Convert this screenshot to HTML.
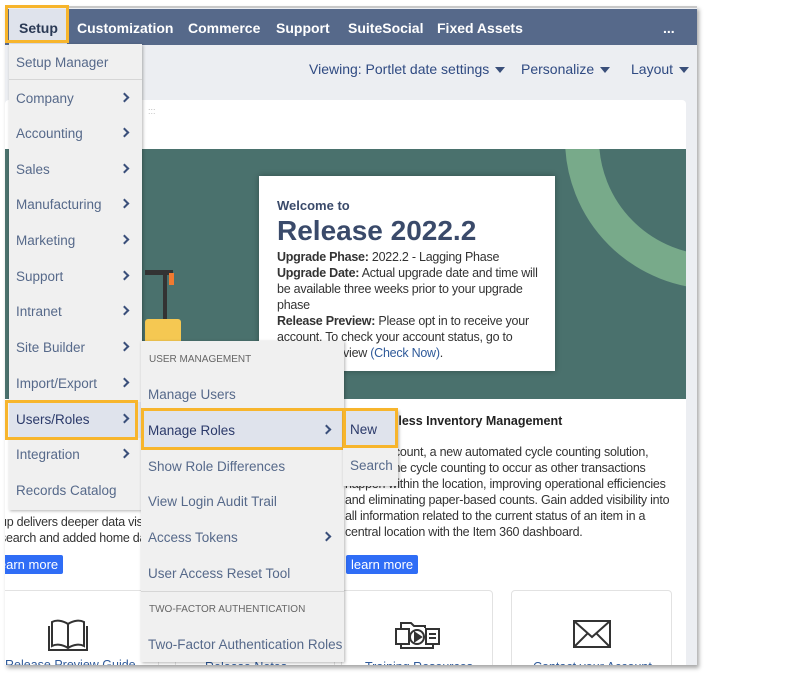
<!DOCTYPE html>
<html><head><meta charset="utf-8">
<style>
*{box-sizing:border-box;margin:0;padding:0}
body{width:794px;height:674px;background:#fff;position:relative;overflow:hidden;font-family:"Liberation Sans",sans-serif}
.abs{position:absolute}
.frame{left:5px;top:6px;width:692px;height:659px;background:#eceef2;border-top:2px solid #c8c8c8;box-shadow:2px 3px 4px rgba(0,0,0,.35);overflow:hidden}
.nav{left:0;top:1px;width:692px;height:36px;background:#56698a}
.nav span{position:absolute;top:11px;color:#fff;font-weight:bold;font-size:14px}
.sub{color:#2f4a82;font-size:14px;top:53px}
.tri{display:inline-block;width:0;height:0;border-left:5px solid transparent;border-right:5px solid transparent;border-top:6px solid #3a4f7a;margin-left:6px;vertical-align:middle}
.menu{background:#f0f0f0;box-shadow:1px 1px 3px rgba(0,0,0,.3)}
.mi{position:absolute;left:0;width:100%;font-size:13.5px;color:#56698a;padding-left:7px}
.chev{position:absolute;right:14px;top:3px;width:7px;height:7px;border-right:2px solid #3a4f7a;border-top:2px solid #3a4f7a;transform:rotate(45deg)}
.obox{position:absolute;border:3px solid #f7b52c}
.txt{font-size:12.5px;color:#333;line-height:16px;letter-spacing:-0.25px}
.btn{background:#2f6df6;color:#fff;font-size:13px;padding:2px 5px;border-radius:2px}
.card{background:#fff;border:1px solid #e2e2e2;border-radius:4px}
.lnk{color:#2f5a9a;font-size:12.5px}
</style></head><body>
<div class="abs frame">
  <div class="abs nav">
    <span style="left:72px">Customization</span>
    <span style="left:183px">Commerce</span>
    <span style="left:271px">Support</span>
    <span style="left:343px">SuiteSocial</span>
    <span style="left:432px">Fixed Assets</span>
    <span style="left:658px">...</span>
  </div>
  <div class="abs" style="left:4px;top:1px;width:58px;height:35px;background:#dfe3ec"></div>
  <span class="abs" style="left:14px;top:12px;font-weight:bold;font-size:14px;color:#2b3a55">Setup</span>
  <div class="abs sub" style="left:304px">Viewing: Portlet date settings<i class="tri"></i></div>
  <div class="abs sub" style="left:516px">Personalize<i class="tri"></i></div>
  <div class="abs sub" style="left:626px">Layout<i class="tri"></i></div>
  <div class="abs" style="left:0;top:92px;width:681px;height:570px;background:#fff;border-radius:4px"></div>
  <div class="abs" style="left:143px;top:98px;color:#bbb;font-size:9px">:::</div>
  <div class="abs" style="left:0;top:141px;width:681px;height:250px;background:#4a716d;overflow:hidden">
    <div class="abs" style="left:560px;top:-160px;width:300px;height:300px;border-radius:50%;border:34px solid #78aa8a"></div>
    <div class="abs" style="left:140px;top:121px;width:28px;height:5px;background:#333"></div>
    <div class="abs" style="left:158px;top:121px;width:4px;height:55px;background:#333"></div>
    <div class="abs" style="left:164px;top:124px;width:5px;height:12px;background:#f07a30"></div>
    <div class="abs" style="left:140px;top:170px;width:36px;height:40px;background:#f5c852;border-radius:3px"></div>
  </div>
  <div class="abs" style="left:254px;top:168px;width:296px;height:195px;background:#fff;box-shadow:0 0 6px rgba(0,0,0,.3);padding:22px 12px 0 18px">
    <div style="font-weight:bold;font-size:13px;color:#3a4a6a">Welcome to</div>
    <div style="font-weight:bold;font-size:28px;color:#3a4a6a;margin:2px 0 2px">Release 2022.2</div>
    <div class="txt"><b>Upgrade Phase:</b> 2022.2 - Lagging Phase<br><b>Upgrade Date:</b> Actual upgrade date and time will be available three weeks prior to your upgrade phase<br><b>Release Preview:</b> Please opt in to receive your account. To check your account status, go to Release Preview <span style="color:#2f5a9a">(Check Now)</span>.</div>
  </div>
  <div class="abs" style="left:360px;top:406px;font-weight:bold;font-size:12.5px;color:#222">Seamless Inventory Management</div>
  <div class="abs txt" style="left:340px;top:436px;width:335px">With this count, a new automated cycle counting solution, enables the cycle counting to occur as other transactions happen within the location, improving operational efficiencies and eliminating paper-based counts. Gain added visibility into all information related to the current status of an item in a central location with the Item 360 dashboard.</div>
  <div class="abs txt" style="left:-5px;top:506px;white-space:nowrap">up delivers deeper data visibility<br>search and added home dashboards</div>
  <div class="abs btn" style="left:-14px;top:547px">learn more</div>
  <div class="abs btn" style="left:341px;top:547px">learn more</div>
  <div class="abs card" style="left:-6px;top:582px;width:160px;height:90px"></div>
  <div class="abs card" style="left:170px;top:582px;width:160px;height:90px"></div>
  <div class="abs card" style="left:336px;top:582px;width:152px;height:90px"></div>
  <div class="abs card" style="left:506px;top:582px;width:161px;height:90px"></div>
  <svg class="abs" style="left:43px;top:610px" width="40" height="34" viewBox="0 0 40 34" fill="none" stroke="#333" stroke-width="2"><path d="M20 6 C14 2 8 2 4 4 V28 C8 26 14 26 20 30 C26 26 32 26 36 28 V4 C32 2 26 2 20 6 Z M20 6 V30 M1 8 V32 H39 V8"/></svg>
  <svg class="abs" style="left:390px;top:612px" width="46" height="30" viewBox="0 0 46 30" fill="none" stroke="#333" stroke-width="2"><path d="M6 8 V3 H16 L19 6 H30 V8"/><rect x="1" y="9" width="13" height="15"/><circle cx="22" cy="17" r="7"/><path d="M20 13 L26 17 L20 21Z" fill="#333"/><rect x="31" y="9" width="13" height="15"/><path d="M34 14 H41 M34 18 H41"/><path d="M6 24 V28 H38 V24"/></svg>
  <svg class="abs" style="left:568px;top:612px" width="38" height="28" viewBox="0 0 38 28" fill="none" stroke="#333" stroke-width="2"><rect x="1" y="1" width="36" height="26"/><path d="M1 1 L19 17 L37 1 M1 27 L15 13 M37 27 L23 13"/></svg>
  <div class="abs lnk" style="left:0;top:650px">Release Preview Guide</div>
  <div class="abs lnk" style="left:200px;top:652px">Release Notes</div>
  <div class="abs lnk" style="left:360px;top:652px">Training Resources</div>
  <div class="abs lnk" style="left:528px;top:652px">Contact your Account</div>
</div>

<div class="abs menu" style="left:9px;top:44px;width:133px;height:466px">
  <div class="mi" style="top:11px">Setup Manager</div>
  <div class="abs" style="left:0;top:35px;width:133px;height:1px;background:#d6d6d6"></div>
  <div class="mi" style="top:47px">Company<i class="chev"></i></div>
  <div class="mi" style="top:82px">Accounting<i class="chev"></i></div>
  <div class="mi" style="top:118px">Sales<i class="chev"></i></div>
  <div class="mi" style="top:153px">Manufacturing<i class="chev"></i></div>
  <div class="mi" style="top:189px">Marketing<i class="chev"></i></div>
  <div class="mi" style="top:225px">Support<i class="chev"></i></div>
  <div class="mi" style="top:260px">Intranet<i class="chev"></i></div>
  <div class="mi" style="top:296px">Site Builder<i class="chev"></i></div>
  <div class="mi" style="top:332px">Import/Export<i class="chev"></i></div>
  <div class="abs" style="left:0;top:358px;width:133px;height:36px;background:#dfe3ec"></div>
  <div class="mi" style="top:368px;color:#2b3a6a">Users/Roles<i class="chev"></i></div>
  <div class="mi" style="top:403px">Integration<i class="chev"></i></div>
  <div class="mi" style="top:439px">Records Catalog</div>
</div>
<div class="obox" style="left:5px;top:400px;width:133px;height:40px"></div>
<div class="obox" style="left:5px;top:5px;width:64px;height:38px"></div>

<div class="abs menu" style="left:141px;top:341px;width:203px;height:321px">
  <div class="abs" style="left:8px;top:13px;font-size:10px;color:#666">USER MANAGEMENT</div>
  <div class="mi" style="top:46px">Manage Users</div>
  <div class="abs" style="left:0;top:68px;width:203px;height:40px;background:#dfe3ec"></div>
  <div class="mi" style="top:82px;color:#2b3a6a">Manage Roles<i class="chev"></i></div>
  <div class="mi" style="top:118px">Show Role Differences</div>
  <div class="mi" style="top:153px">View Login Audit Trail</div>
  <div class="mi" style="top:189px">Access Tokens<i class="chev"></i></div>
  <div class="mi" style="top:225px">User Access Reset Tool</div>
  <div class="abs" style="left:0;top:250px;width:203px;height:1px;background:#d6d6d6"></div>
  <div class="abs" style="left:8px;top:263px;font-size:10px;color:#666">TWO-FACTOR AUTHENTICATION</div>
  <div class="mi" style="top:296px">Two-Factor Authentication Roles</div>
</div>
<div class="obox" style="left:141px;top:408px;width:204px;height:42px"></div>

<div class="abs menu" style="left:343px;top:410px;width:55px;height:76px">
  <div class="abs" style="left:0;top:0;width:55px;height:35px;background:#dfe3ec"></div>
  <div class="mi" style="top:12px;color:#2b3a6a">New</div>
  <div class="mi" style="top:48px">Search</div>
</div>
<div class="obox" style="left:343px;top:408px;width:55px;height:40px"></div>
</body></html>
